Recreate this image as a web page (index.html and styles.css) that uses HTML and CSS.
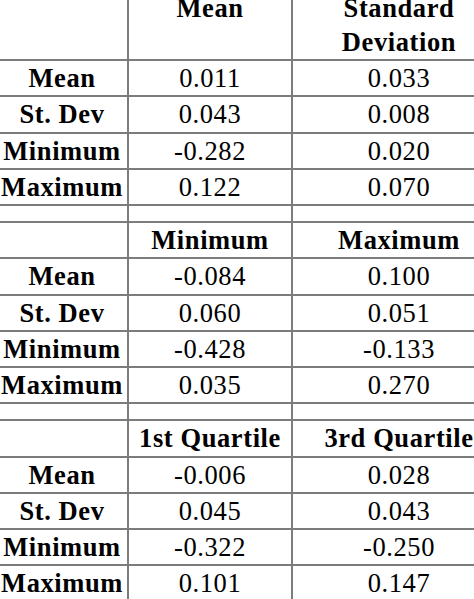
FILE: index.html
```html
<!DOCTYPE html>
<html lang="en">
<head>
<meta charset="utf-8">
<title>Statistics table</title>
<link rel="stylesheet" href="styles.css">
</head>
<body>
<table class="stats">
  <colgroup>
    <col class="c-label">
    <col class="c-a">
    <col class="c-b">
  </colgroup>
  <tbody>
    <tr class="head head-top"><td></td><th>Mean</th><th>Standard<br>Deviation</th></tr>
    <tr><th>Mean</th><td>0.011</td><td>0.033</td></tr>
    <tr><th>St. Dev</th><td>0.043</td><td>0.008</td></tr>
    <tr><th>Minimum</th><td>-0.282</td><td>0.020</td></tr>
    <tr><th>Maximum</th><td>0.122</td><td>0.070</td></tr>
    <tr class="sep"><td></td><td></td><td></td></tr>
    <tr class="head"><td></td><th>Minimum</th><th>Maximum</th></tr>
    <tr><th>Mean</th><td>-0.084</td><td>0.100</td></tr>
    <tr><th>St. Dev</th><td>0.060</td><td>0.051</td></tr>
    <tr><th>Minimum</th><td>-0.428</td><td>-0.133</td></tr>
    <tr><th>Maximum</th><td>0.035</td><td>0.270</td></tr>
    <tr class="sep"><td></td><td></td><td></td></tr>
    <tr class="head"><td></td><th>1st Quartile</th><th>3rd Quartile</th></tr>
    <tr><th>Mean</th><td>-0.006</td><td>0.028</td></tr>
    <tr><th>St. Dev</th><td>0.045</td><td>0.043</td></tr>
    <tr><th>Minimum</th><td>-0.322</td><td>-0.250</td></tr>
    <tr><th>Maximum</th><td>0.101</td><td>0.147</td></tr>
  </tbody>
</table>
</body>
</html>
```

FILE: styles.css
```css
html, body {
  margin: 0;
  padding: 0;
  overflow: hidden;
  background: #ffffff;
}

.stats {
  border-collapse: collapse;
  table-layout: fixed;
  width: 510px;
  margin: -10px 0 0 -5px;
  font-family: "Liberation Serif", "Times New Roman", serif;
  font-size: 26.5px;
  letter-spacing: 0.6px;
  color: #000000;
}

.c-label { width: 132px; }
.c-a { width: 164px; }
.c-b { width: 214px; }

.stats td,
.stats th {
  border: 2px solid #7c7c7c;
  padding: 0;
  text-align: center;
  vertical-align: middle;
  line-height: 34.25px;
  white-space: nowrap;
}

.stats th { font-weight: bold; }
.stats td { font-weight: normal; }

.head-top td,
.head-top th {
  vertical-align: top;
  line-height: 33.5px;
}

.sep td {
  height: 15px;
  line-height: 15px;
}
```
